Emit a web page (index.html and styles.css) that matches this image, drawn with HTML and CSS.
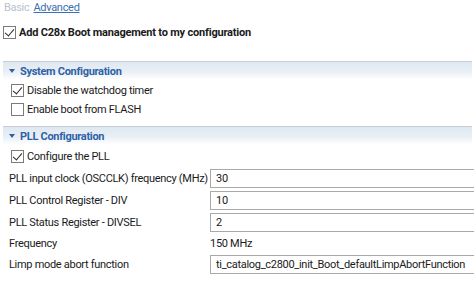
FILE: index.html
```html
<!DOCTYPE html>
<html>
<head>
<meta charset="utf-8">
<link rel="stylesheet" href="styles.css">
</head>
<body>
<div class="tabs"><span class="tab-basic">Basic</span><span class="tab-adv">Advanced</span></div>
<label class="check main"><span class="box on"></span>Add C28x Boot management to my configuration</label>
<div class="section">
  <div class="sec-head"><span class="tri"></span>System Configuration</div>
  <div class="sec-body">
    <label class="check"><span class="box on"></span>Disable the watchdog timer</label>
    <label class="check"><span class="box"></span>Enable boot from FLASH</label>
  </div>
</div>
<div class="section pll">
  <div class="sec-head"><span class="tri"></span>PLL Configuration</div>
  <div class="sec-body">
    <label class="check"><span class="box on"></span>Configure the PLL</label>
    <div class="form">
      <span class="lbl">PLL input clock (OSCCLK) frequency (MHz)</span><span class="inp">30</span>
      <span class="lbl">PLL Control Register - DIV</span><span class="inp">10</span>
      <span class="lbl">PLL Status Register - DIVSEL</span><span class="inp">2</span>
      <span class="lbl short">Frequency</span><span class="val">150 MHz</span>
      <span class="lbl">Limp mode abort function</span><span class="inp">ti_catalog_c2800_init_Boot_defaultLimpAbortFunction</span>
    </div>
  </div>
</div>
</body>
</html>
```
FILE: styles.css
```css
html, body { margin: 0; padding: 0; background: #fff; }
body {
  font-family: Roboto, "Open Sans", sans-serif;
  font-size: 11px;
  letter-spacing: -0.3px;
  color: #1a1a1a;
  width: 474px;
  height: 283px;
  overflow: hidden;
}
.tabs { height: 16px; line-height: 16px; padding-left: 4px; display: flex; gap: 4px; }
.tab-basic { color: #b9c3cc; }
.tab-adv { color: #3a6fb0; text-decoration: underline; }
.check { display: flex; align-items: center; height: 19px; line-height: 19px; white-space: nowrap; }
.box {
  width: 11px; height: 11px; border: 1px solid #7b7b7b; margin-right: 3px;
  background: #fff; position: relative; flex: none;
}
.box.on::after {
  content: ""; position: absolute; left: 3px; top: 0px; width: 4px; height: 8px;
  border: solid #2a2a2a; border-width: 0 1.5px 1.5px 0; transform: rotate(40deg);
}
.main { margin-top: 7px; padding-left: 3px; font-weight: 700; letter-spacing: -0.2px; }
.section { margin-top: 19px; margin-left: 3px; margin-right: 2px; }
.section.pll { margin-top: 7px; }
.sec-head {
  height: 18px; border-top: 1px solid #c9ced6;
  background: linear-gradient(to bottom, #dfe8f1 0%, #e8eef5 50%, #ffffff 100%);
  display: flex; align-items: center; color: #2e62a6; font-weight: 700;
  padding-left: 6px;
}
.tri { width: 0; height: 0; border-left: 3.5px solid transparent; border-right: 3.5px solid transparent; border-top: 4px solid #2e62a6; margin-right: 5px; }
.sec-body { padding-left: 8px; padding-top: 1px; }
.pll .sec-body { padding-top: 2px; }
.form {
  display: grid; grid-template-columns: 201px 1fr; row-gap: 3px; margin-left: -2px; margin-top: 3px;
}
.lbl { height: 19px; line-height: 19px; white-space: nowrap; }
.lbl.short, .val { height: 17px; line-height: 17px; }
.inp {
  height: 17px; line-height: 17px; border: 1px solid #a9a9a9; border-right: none; padding-left: 5px;
  white-space: nowrap; margin-right: -4px; overflow: hidden;
}
```
